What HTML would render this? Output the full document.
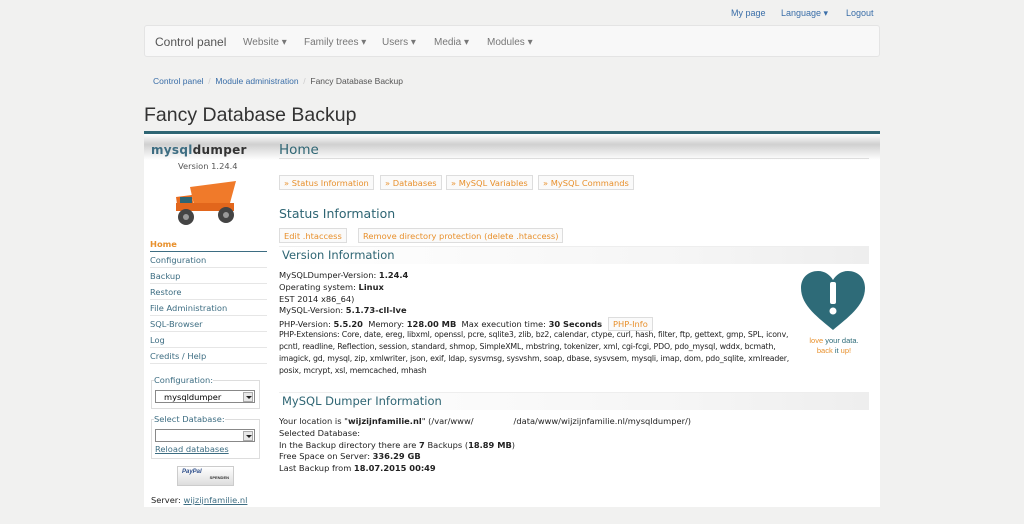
<!DOCTYPE html>
<html><head><meta charset="utf-8"><style>
*{box-sizing:border-box;margin:0;padding:0}
body{width:1024px;height:524px;background:#f1f1f0;font-family:"Liberation Sans",sans-serif;position:relative;overflow:hidden}
a{text-decoration:none}
.abs{position:absolute}
.top a{position:absolute;top:8px;font-size:9px;color:#3a6ea8}
.nav{left:144px;top:25px;width:736px;height:32px;background:#f8f8f8;border:1px solid #e4e4e4;border-radius:3px}
.nav span{position:absolute;top:11px;font-size:10px;color:#777}
.crumb{left:153px;top:76px;font-size:8.5px;color:#555}
.crumb a{color:#3a6ea8}
h1{position:absolute;left:144px;top:104px;font-size:19.5px;font-weight:normal;color:#333}
.box{left:144px;top:131px;width:736px;height:376px;background:#fff;border-top:3px solid #2e6573}
.hdr{left:0;top:0;width:736px;height:26px;background:linear-gradient(#fff,#d0d0d0 40%,#f0f0f0 80%,#fff)}
.s{font-family:"DejaVu Sans",sans-serif;font-size:8.3px;color:#222}
.menu div{position:absolute;left:6px;width:117px;height:16px;border-bottom:1px solid #e6e6e6;font-family:"DejaVu Sans",sans-serif;font-size:8.3px;color:#3d6d82;padding-top:3px;padding-left:0}
.btn{position:absolute;height:15px;border:1px solid #ddd;background:#fafafa;font-family:"DejaVu Sans",sans-serif;font-size:8.3px;color:#e8902c;padding:2px 4px;white-space:nowrap}
.h2{position:absolute;font-family:"DejaVu Sans",sans-serif;color:#2e6573}
.sec{position:absolute;left:135px;width:590px;height:18px;background:linear-gradient(90deg,#fff,#f5f5f5 70%,#eee);border-top:1px solid #eee}
.lines div{height:11.8px;white-space:nowrap}
.lines .x{font-size:7.8px;letter-spacing:-0.16px}
b{font-weight:bold}
fieldset{position:absolute;border:1px solid #ddd;padding:0}
legend{font-family:"DejaVu Sans",sans-serif;font-size:8.3px;color:#3d6d82;margin-left:2px}
.sel{position:absolute;border:1px solid #888;background:#fff;height:13px;font-family:"DejaVu Sans",sans-serif;font-size:8.3px;padding:1px 0 0 8px}
.sel i{position:absolute;right:1px;top:1px;width:10px;height:10px;background:#e8e8e8;border:1px solid #aaa}
.sel i:after{content:"";position:absolute;left:2px;top:3px;border:3px solid transparent;border-top:3px solid #222}
.pi{display:inline-block;border:1px solid #ddd;background:#fafafa;color:#e8902c;padding:1px 4px;margin-left:6px;line-height:10px}
</style></head><body>
<div class="top"><a style="left:731px">My page</a><a style="left:781px">Language ▾</a><a style="left:846px">Logout</a></div>
<div class="abs nav"><span style="left:10px;top:9px;font-size:12px;color:#555">Control panel</span><span style="left:98px">Website ▾</span><span style="left:159px">Family trees ▾</span><span style="left:237px">Users ▾</span><span style="left:289px">Media ▾</span><span style="left:342px">Modules ▾</span></div>
<div class="abs crumb"><a>Control panel</a> <span style="color:#ccc">&nbsp;/&nbsp;</span> <a>Module administration</a> <span style="color:#ccc">&nbsp;/&nbsp;</span> Fancy Database Backup</div>
<h1>Fancy Database Backup</h1>
<div class="abs box">
<div class="abs hdr"></div>
<div class="abs" style="left:7px;top:9px;font-family:'DejaVu Sans',sans-serif;font-weight:bold;font-size:12px;letter-spacing:0.3px"><span style="color:#3d6d82">mysql</span><span style="color:#333">dumper</span></div>
<div class="abs s" style="left:34px;top:27px;color:#555">Version 1.24.4</div>
<svg class="abs" style="left:28px;top:44px" width="66" height="50" viewBox="0 0 66 48">
<polygon points="18,8 64,2 58,24 22,26" fill="#f07a2a"/><polygon points="4,18 20,16 22,30 6,32" fill="#e86b1e"/><rect x="8" y="18" width="12" height="6" fill="#2e6573"/>
<rect x="4" y="24" width="58" height="8" fill="#e2661c"/>
<circle cx="14" cy="38" r="8" fill="#444"/><circle cx="14" cy="38" r="3" fill="#999"/><circle cx="54" cy="36" r="8" fill="#444"/><circle cx="54" cy="36" r="3" fill="#999"/>
</svg>
<div class="menu">
<div style="top:102px;color:#e8902c;font-weight:bold;border-bottom:1px solid #3d6d82">Home</div>
<div style="top:118px">Configuration</div><div style="top:134px">Backup</div><div style="top:150px">Restore</div><div style="top:166px">File Administration</div><div style="top:182px">SQL-Browser</div><div style="top:198px">Log</div><div style="top:214px">Credits / Help</div>
</div>
<fieldset style="left:7px;top:241px;width:109px;height:34px"><legend>Configuration:</legend></fieldset>
<div class="sel" style="left:11px;top:256px;width:100px">mysqldumper<i></i></div>
<fieldset style="left:7px;top:280px;width:109px;height:45px"><legend>Select Database:</legend></fieldset>
<div class="sel" style="left:11px;top:295px;width:100px"><i></i></div>
<div class="abs s" style="left:11px;top:310px;color:#3d6d82;text-decoration:underline">Reload databases</div>
<div class="abs" style="left:33px;top:332px;width:57px;height:20px;border:1px solid #ccc;background:linear-gradient(#fff,#ddd);font-size:6px;color:#2e4e8a;font-style:italic;font-weight:bold;padding:2px 4px">PayPal<div style="font-size:4px;color:#333;text-align:right;font-style:normal">SPENDEN</div></div>
<div class="abs s" style="left:7px;top:361px">Server: <span style="color:#3d6d82;text-decoration:underline">wijzijnfamilie.nl</span></div>

<div class="h2" style="left:135px;top:8px;font-size:13.5px">Home</div>
<div class="abs" style="left:135px;top:24px;width:590px;height:1px;background:#ddd"></div>
<div class="btn" style="left:135px;top:41px">» Status Information</div>
<div class="btn" style="left:236px;top:41px">» Databases</div>
<div class="btn" style="left:302px;top:41px">» MySQL Variables</div>
<div class="btn" style="left:394px;top:41px">» MySQL Commands</div>
<div class="h2" style="left:135px;top:72px;font-size:12.5px">Status Information</div>
<div class="btn" style="left:135px;top:94px">Edit .htaccess</div>
<div class="btn" style="left:214px;top:94px">Remove directory protection (delete .htaccess)</div>
<div class="sec" style="top:112px"></div>
<div class="h2" style="left:138px;top:114px;font-size:11.5px">Version Information</div>
<div class="abs s lines" style="left:135px;top:136px">
<div>MySQLDumper-Version: <b>1.24.4</b></div>
<div>Operating system: <b>Linux</b></div>
<div>EST 2014 x86_64)</div>
<div>MySQL-Version: <b>5.1.73-cll-lve</b></div>
<div style="height:13px">PHP-Version: <b>5.5.20</b> &nbsp;Memory: <b>128.00 MB</b> &nbsp;Max execution time: <b>30 Seconds</b><span class="pi">PHP-Info</span></div>
<div class="x">PHP-Extensions: Core, date, ereg, libxml, openssl, pcre, sqlite3, zlib, bz2, calendar, ctype, curl, hash, filter, ftp, gettext, gmp, SPL, iconv,</div>
<div class="x">pcntl, readline, Reflection, session, standard, shmop, SimpleXML, mbstring, tokenizer, xml, cgi-fcgi, PDO, pdo_mysql, wddx, bcmath,</div>
<div class="x">imagick, gd, mysql, zip, xmlwriter, json, exif, ldap, sysvmsg, sysvshm, soap, dbase, sysvsem, mysqli, imap, dom, pdo_sqlite, xmlreader,</div>
<div class="x">posix, mcrypt, xsl, memcached, mhash</div>
</div>
<svg class="abs" style="left:655px;top:136px" width="68" height="60" viewBox="0 0 68 60"><path d="M34 60 C20 48 2 36 2 18 C2 7 10 1 19 1 C26 1 31 5 34 10 C37 5 42 1 49 1 C58 1 66 7 66 18 C66 36 48 48 34 60Z" fill="#2e6b78"/><rect x="31" y="12" width="6" height="22" rx="2" fill="#fff"/><circle cx="34" cy="41" r="3.5" fill="#fff"/></svg>
<div class="abs" style="left:660px;top:202px;font-size:7.5px;text-align:center;width:60px;line-height:10px;color:#e8902c">love <span style="color:#2e6b78">your data.</span><br>back <span style="color:#2e6b78">it</span> up!</div>
<div class="sec" style="top:258px"></div>
<div class="h2" style="left:138px;top:260px;font-size:11.5px">MySQL Dumper Information</div>
<div class="abs s lines" style="left:135px;top:282px">
<div>Your location is "<b>wijzijnfamilie.nl</b>" (/var/www/<span style="display:inline-block;width:40px"></span>/data/www/wijzijnfamilie.nl/mysqldumper/)</div>
<div>Selected Database:</div>
<div>In the Backup directory there are <b>7</b> Backups (<b>18.89 MB</b>)</div>
<div>Free Space on Server: <b>336.29 GB</b></div>
<div>Last Backup from <b>18.07.2015 00:49</b></div>
</div>
</div>
</body></html>
